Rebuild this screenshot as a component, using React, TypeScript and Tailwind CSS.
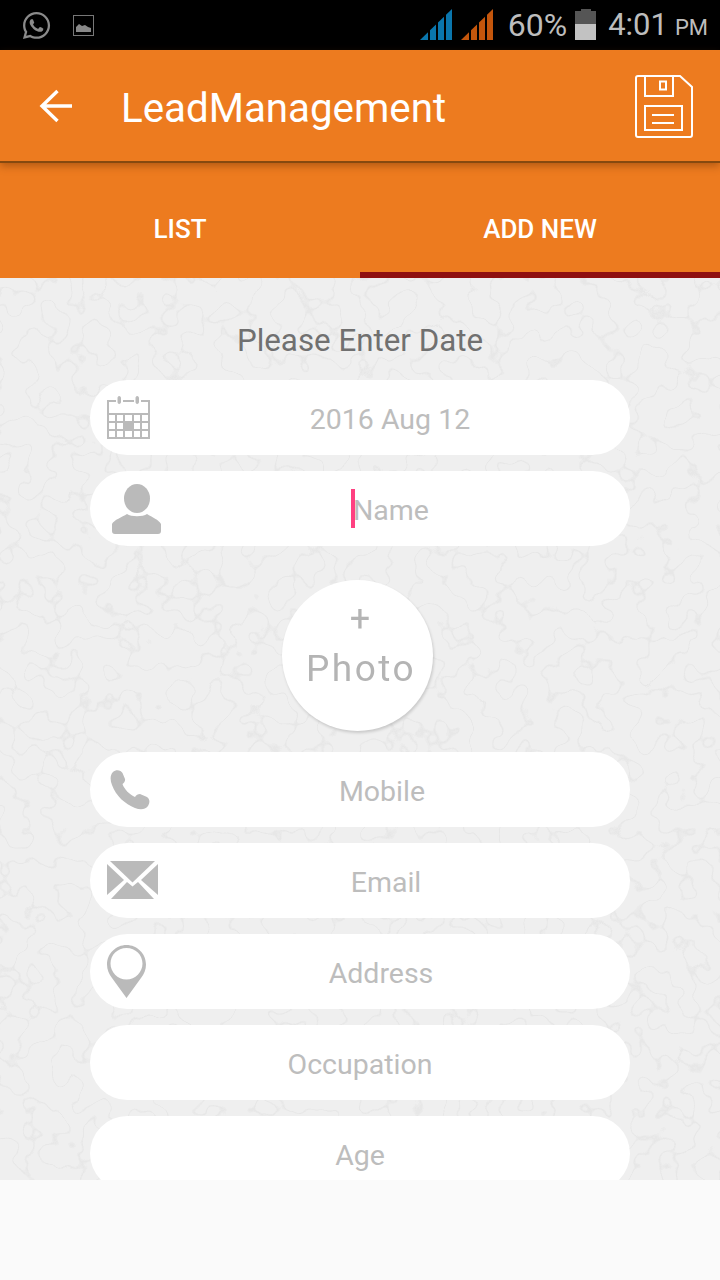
import type { ReactNode } from "react";
import { FaWhatsapp } from "react-icons/fa";

// marble veins: noise mapped so only a thin band of values stays visible
function PaperTexture() {
  return (
    <svg className="absolute inset-0 h-full w-full" aria-hidden="true">
      <defs>
        <filter id="veins" x="0" y="0" width="100%" height="100%" colorInterpolationFilters="sRGB">
          <feTurbulence type="fractalNoise" baseFrequency="0.036" numOctaves="2" seed="7" />
          <feColorMatrix type="matrix" values="0 0 0 0 0.86  0 0 0 0 0.86  0 0 0 0 0.86  1 0 0 0 0" />
          <feComponentTransfer>
            <feFuncA type="table" tableValues="0 0 0 0 0 0 0 0 0 0 0 0 0 0 0 0 0 0 0 0 0 0.42 0 0 0 0 0 0 0 0 0 0 0 0 0 0 0 0 0 0 0 0 0" />
          </feComponentTransfer>
          <feGaussianBlur stdDeviation="0.4" />
        </filter>
      </defs>
      <rect width="100%" height="100%" filter="url(#veins)" />
    </svg>
  );
}

function SignalBars({ color }: { color: string }) {
  return (
    <svg width="32" height="31" viewBox="0 0 32 31" fill={color}>
      <polygon points="0,31 8,23.2 8,31" />
      <polygon points="10,21.3 16,15.5 16,31 10,31" />
      <polygon points="18,13.6 24,7.8 24,31 18,31" />
      <polygon points="26,5.8 32,0 32,31 26,31" />
    </svg>
  );
}

function Battery() {
  return (
    <svg width="21" height="31" viewBox="0 0 21 31">
      <rect x="6" y="0" width="10" height="3" fill="#555" />
      <rect x="0" y="2" width="21" height="13" fill="#555" />
      <rect x="0" y="15" width="21" height="16" fill="#c2c2c2" />
    </svg>
  );
}

function StatusBar() {
  return (
    <div className="flex h-[50px] items-center justify-between bg-black pl-[21px] pr-[12px]">
      <div className="flex items-center gap-[21px]">
        <FaWhatsapp className="h-[31px] w-[31px] text-[#8a8a8a]" />
        <svg width="21" height="21" viewBox="0 0 21 21">
          <rect x="0.5" y="0.5" width="20" height="20" fill="none" stroke="#777" />
          <path d="M3 17 V12 L6 9 L9 11 L12 10 L15 12 L18 13 V17 Z" fill="#888" />
        </svg>
      </div>
      <div className="flex items-center text-[#bdbdbd] font-['Roboto',sans-serif]">
        <div className="mb-[2px]">
          <SignalBars color="#0a76ad" />
        </div>
        <div className="mb-[2px] ml-[9px]">
          <SignalBars color="#c4560c" />
        </div>
        <span className="ml-[15px] text-[32px] leading-[50px]">60%</span>
        <div className="mb-[2px] ml-[8px]">
          <Battery />
        </div>
        <span className="ml-[12px] text-[31px] leading-[50px]">4:01</span>
        <span className="ml-[7px] mt-[5px] text-[22px] leading-[45px]">PM</span>
      </div>
    </div>
  );
}

function SaveIcon() {
  return (
    <svg width="60" height="66" viewBox="0 0 60 66" fill="none" stroke="#fff" strokeWidth="2">
      <path d="M4 2 H46 L58 13 V61 Q58 63 56 63 H4 Q2 63 2 61 V4 Q2 2 4 2 Z" />
      <path d="M11 2 V22 H39 V2" />
      <rect x="26" y="7.5" width="6" height="8" />
      <rect x="11" y="32" width="37" height="24" />
      <path d="M18 41 H40 M18 49 H40" />
    </svg>
  );
}

function AppBar() {
  return (
    <div className="relative z-10 flex h-[113px] items-center border-b-2 border-[#86490f] bg-[#ed7b1f] shadow-[0_3px_8px_rgba(90,40,0,0.4)]">
      <svg className="ml-[39px]" width="34" height="34" viewBox="0 0 34 34" fill="none" stroke="#fff" strokeWidth="3.4">
        <path d="M33 17 H4 M18.5 2 L3 17 L18.5 32" />
      </svg>
      <h1 className="ml-[48px] mt-[7px] flex-1 text-[40.3px] font-normal leading-[44px] text-white font-['Roboto',sans-serif]">
        LeadManagement
      </h1>
      <div className="mr-[26px] mt-[2px]">
        <SaveIcon />
      </div>
    </div>
  );
}

function Tabs() {
  return (
    <div className="grid h-[115px] grid-cols-2 bg-[#ed7b1f] font-['Roboto',sans-serif] text-[26px] font-medium text-white">
      <div className="flex items-center justify-center border-b-[6px] border-transparent pt-[24px]">LIST</div>
      <div className="flex items-center justify-center border-b-[6px] border-[#8f1010] pt-[24px]">ADD NEW</div>
    </div>
  );
}

function CalendarIcon() {
  return (
    <svg width="43" height="43" viewBox="0 0 43 43" fill="none" stroke="#bababa" strokeWidth="2">
      <path d="M9 5 H1 V42 H42 V5 H34 M16 5 H27" />
      <rect x="11" y="0.5" width="2.5" height="7" rx="1.2" fill="#bababa" strokeWidth="1" />
      <rect x="29" y="0.5" width="2.5" height="7" rx="1.2" fill="#bababa" strokeWidth="1" />
      <path d="M1 18 H42 M1 26 H42 M1 34 H42 M9 18 V42 M17 18 V42 M26 18 V42 M34 18 V42" />
      <rect x="17" y="26" width="9" height="8" fill="#bababa" />
    </svg>
  );
}

function PersonIcon() {
  return (
    <svg width="51" height="50" viewBox="0 0 51 50" fill="#bababa">
      <ellipse cx="26" cy="14.5" rx="13" ry="14.5" />
      <path d="M16 30 C20 33 32 33 36 30 C41 33 48 36 50 40 V47 Q50 50 47 50 H4 Q1 50 1 47 V40 C3 36 11 33 16 30 Z" />
    </svg>
  );
}

function PhoneIcon() {
  return (
    <svg width="40" height="40" viewBox="0 0 40 40" fill="#bababa">
      <path d="M3 2 C6 -1 11 0 12.5 3 L15 9 C15.5 11 14 13 12.5 14 C14 19 20 25 25 27 C26 25 28 24 30 24 L37 27 C40 29 40 33 38 36 C35 40 30 40 25 38 C15 34 6 26 2 15 C0 10 0 5 3 2 Z" />
    </svg>
  );
}

function MailIcon() {
  return (
    <svg width="51" height="38" viewBox="0 0 51 38" fill="#bababa">
      <polygon points="3,0 48,0 25.5,21.5" />
      <polygon points="0,3 17,19 0,34" />
      <polygon points="51,3 34,19 51,34" />
      <polygon points="4,38 20,21 25.5,25.5 31,21 47,38" />
    </svg>
  );
}

function PinIcon() {
  return (
    <svg width="39" height="53" viewBox="0 0 39 53" fill="#bababa">
      <path
        fillRule="evenodd"
        d="M19.5 0 C30 0 39 8.5 39 19.5 C39 25 37 29 34 33 L19.5 53 L5 33 C2 29 0 25 0 19.5 C0 8.5 9 0 19.5 0 Z M19.5 3 C10.5 3 3.5 10 3.5 18.5 C3.5 27 10.5 34.5 19.5 34.5 C28.5 34.5 35.5 27 35.5 18.5 C35.5 10 28.5 3 19.5 3 Z"
      />
    </svg>
  );
}

type FieldProps = {
  label: string;
  icon?: ReactNode;
  iconClass?: string;
  textClass?: string;
  caret?: boolean;
};

function Field({ label, icon, iconClass, textClass, caret }: FieldProps) {
  return (
    <div className="relative flex h-[75px] w-[540px] shrink-0 items-center justify-center rounded-full bg-white">
      {icon && <div className={`absolute ${iconClass}`}>{icon}</div>}
      <div className={`relative text-[28.5px] leading-[36px] text-[#bdbdbd] ${textClass ?? ""}`}>
        {caret && <span className="absolute left-[-2px] top-[-4px] h-[39px] w-[4px] bg-[#ff4081]" />}
        {label}
      </div>
    </div>
  );
}

export default function App() {
  return (
    <div className="flex h-[1280px] w-[720px] flex-col overflow-hidden bg-[#fafafa] font-['Roboto',sans-serif]">
      <StatusBar />
      <AppBar />
      <Tabs />
      <main className="relative h-[902px] shrink-0 overflow-hidden bg-[#efefef]">
        <PaperTexture />
        <div className="relative flex flex-col items-center pt-[43px]">
          <p className="mb-[19px] text-[31.3px] leading-[40px] text-[#707070]">Please Enter Date</p>
          <div className="flex flex-col gap-[16px]">
            <Field label="2016 Aug 12" icon={<CalendarIcon />} iconClass="left-[17px] top-[16px]" textClass="ml-[60px] mt-[5px]" />
            <Field label="Name" icon={<PersonIcon />} iconClass="left-[21px] top-[13px]" textClass="ml-[62px] mt-[5px]" caret />
          </div>
          <div className="ml-[-5px] mb-[21px] mt-[34px] flex h-[151px] w-[151px] flex-col items-center rounded-full bg-white text-[#b4b4b4] shadow-[1px_2px_3px_rgba(0,0,0,0.16)]">
            <span className="ml-[5px] mt-[19px] text-[36px] leading-[40px] blur-[0.5px]">+</span>
            <span className="ml-[7px] mt-[8px] text-[37px] leading-[44px] tracking-[2.5px] blur-[0.5px]">Photo</span>
          </div>
          <div className="flex flex-col gap-[16px]">
            <Field label="Mobile" icon={<PhoneIcon />} iconClass="left-[20px] top-[18px]" textClass="ml-[44px] mt-[5px]" />
            <Field label="Email" icon={<MailIcon />} iconClass="left-[17px] top-[18px]" textClass="ml-[52px] mt-[5px]" />
            <Field label="Address" icon={<PinIcon />} iconClass="left-[17px] top-[11px]" textClass="ml-[42px] mt-[5px]" />
            <Field label="Occupation" textClass="mt-[5px]" />
            <Field label="Age" textClass="mt-[5px]" />
          </div>
        </div>
      </main>
      <div className="flex-1 bg-[#fafafa]" />
    </div>
  );
}
